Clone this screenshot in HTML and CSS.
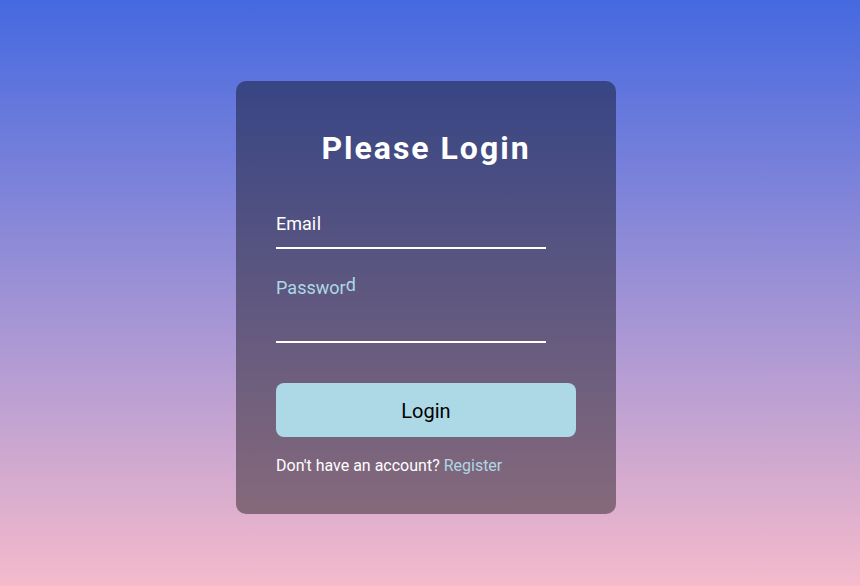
FILE: index.html
```html
<!DOCTYPE html>
<html lang="en">
<head>
<meta charset="UTF-8">
<title>Please Login</title>
<link rel="stylesheet" href="styles.css">
</head>
<body>
<div class="container">
  <h1 class="title">Please Login</h1>
  <form class="form">
    <div class="form-control form-control--email">
      <input class="field" type="text" aria-label="Email">
      <label class="label"><span>E</span><span>m</span><span>a</span><span>i</span><span>l</span></label>
    </div>
    <div class="form-control form-control--password">
      <input class="field" type="password" aria-label="Password">
      <label class="label label--active"><span>P</span><span>a</span><span>s</span><span>s</span><span>w</span><span>o</span><span>r</span><span class="raised">d</span></label>
    </div>
    <button class="btn" type="button">Login</button>
    <p class="text">Don't have an account? <a class="link" href="#">Register</a></p>
  </form>
</div>
</body>
</html>
```
FILE: styles.css
```css
* {
  box-sizing: border-box;
}

html, body {
  margin: 0;
  padding: 0;
}

body {
  height: 586px;
  background: linear-gradient(180deg, #4569e0 0%, #f5bacb 100%);
  font-family: Roboto, "Liberation Sans", sans-serif;
  color: #fff;
  display: flex;
  align-items: flex-start;
  justify-content: center;
  padding: 81px 8px 0 0;
}

.container {
  width: 380px;
  background: rgba(0, 0, 0, 0.4);
  border-radius: 10px;
  padding: 49px 40px 20px;
}

.title {
  margin: 0 0 30px;
  text-align: center;
  font-size: 32px;
  font-weight: 700;
  letter-spacing: 2px;
  line-height: 37px;
}

.form {
  margin: 0;
}

.form-control {
  position: relative;
  width: 90%;
}

.form-control--email {
  margin: 0 0 42px;
}

.form-control--password {
  margin: 0 0 40px;
}

.field {
  display: block;
  width: 100%;
  background: transparent;
  border: 0;
  border-bottom: 2px solid #fff;
  padding: 15px 0;
  height: 52px;
  font-family: inherit;
  font-size: 18px;
  color: #fff;
  outline: none;
}

.label {
  position: absolute;
  top: 16px;
  left: 0;
  font-size: 18px;
  line-height: 21px;
  color: #fff;
  pointer-events: none;
}

.label span {
  display: inline-block;
  min-width: 5px;
}

.label--active {
  color: #add8e6;
  transform: translateY(-30px);
}

.label .raised {
  transform: translateY(-3px);
}

.btn {
  display: block;
  width: 100%;
  height: 54px;
  background: #add8e6;
  border: 0;
  border-radius: 8px;
  padding: 2px 0 0;
  font-family: inherit;
  font-size: 20px;
  color: #000;
  cursor: pointer;
}

.text {
  margin: 19px 0 19px;
  font-size: 16px;
  line-height: 19px;
}

.link {
  color: #add8e6;
  text-decoration: none;
}
```
